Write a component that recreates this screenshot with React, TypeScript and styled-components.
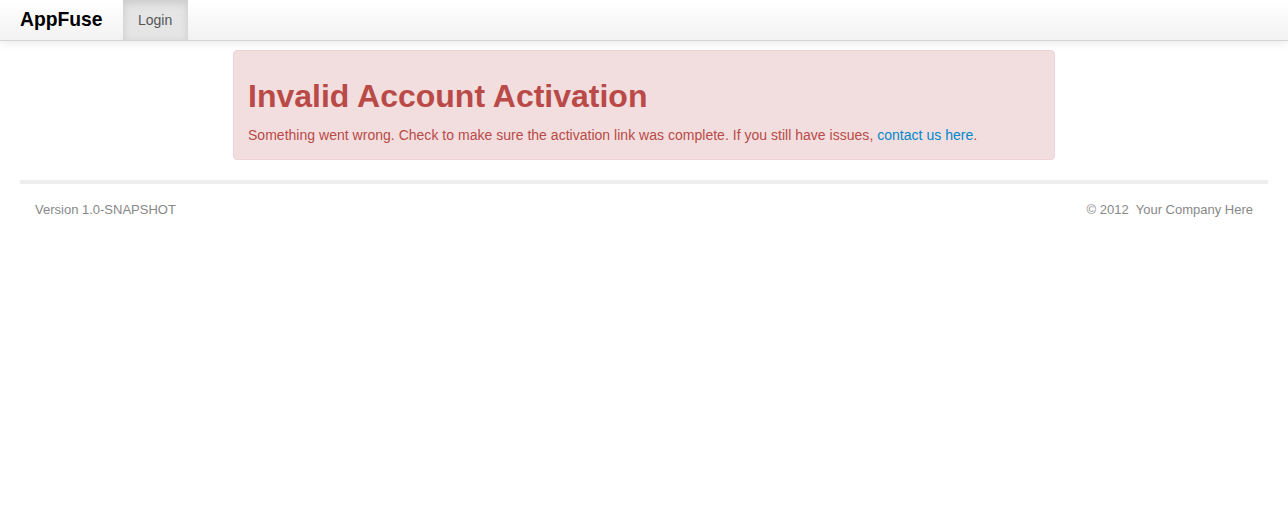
import React from "react";
import styled, { createGlobalStyle } from "styled-components";

const Global = createGlobalStyle`
  html, body { margin: 0; padding: 0; background: #fff; }
  body { font-family: "Liberation Sans", Arial, sans-serif; font-size: 14px; line-height: 20px; color: #333; }
  * { box-sizing: border-box; }
`;

const Navbar = styled.div`
  height: 41px;
  display: flex;
  align-items: stretch;
  padding: 0 20px;
  background: linear-gradient(to bottom, #ffffff, #f2f2f2);
  border-bottom: 1px solid #d4d4d4;
  box-shadow: 0 1px 10px rgba(0, 0, 0, 0.1);
  position: relative;
`;

const Brand = styled.a`
  display: flex;
  align-items: center;
  width: 103px;
  font-size: 19.3px;
  font-weight: bold;
  color: #000;
  text-decoration: none;
  padding-bottom: 1px;
`;

const NavItem = styled.a<{ $active?: boolean }>`
  display: flex;
  align-items: center;
  padding: 0 15px;
  width: 65px;
  height: 40px;
  color: #555;
  text-decoration: none;
  font-size: 14px;
  background: ${(p) => (p.$active ? "#e5e5e5" : "transparent")};
  box-shadow: ${(p) => (p.$active ? "inset 0 3px 8px rgba(0, 0, 0, 0.125)" : "none")};
`;

const Main = styled.div`
  display: flex;
  justify-content: center;
  padding-top: 9px;
`;

const Alert = styled.div`
  width: 822px;
  background: #f2dede;
  border: 1px solid #eed3d7;
  border-radius: 4px;
  color: #b94a48;
  padding: 14px 35px 14px 14px;
`;

const Heading = styled.h1`
  margin: 11px 0 9px;
  font-size: 32px;
  line-height: 40px;
  font-weight: bold;
  color: #b94a48;
`;

const Para = styled.p`
  margin: 0;
  font-size: 14px;
  line-height: 20px;
  letter-spacing: 0.02px;
`;

const Link = styled.a`
  color: #0088cc;
  text-decoration: none;
`;

const Footer = styled.div`
  margin: 20px 20px 0;
  border-top: 4px solid #eeeeee;
  padding: 17px 15px;
  display: flex;
  justify-content: space-between;
  font-size: 13px;
  line-height: 18px;
  color: #888;
`;

const FooterText = styled.span`
  white-space: pre;
`;

export default function App() {
  return (
    <>
      <Global />
      <Navbar>
        <Brand href="#">AppFuse</Brand>
        <NavItem href="#" $active>Login</NavItem>
      </Navbar>
      <Main>
        <Alert>
          <Heading>Invalid Account Activation</Heading>
          <Para>
            Something went wrong. Check to make sure the activation link was complete. If you still have issues,{" "}
            <Link href="#">contact us here</Link>.
          </Para>
        </Alert>
      </Main>
      <Footer>
        <FooterText>Version 1.0-SNAPSHOT</FooterText>
        <FooterText>{"© 2012  Your Company Here"}</FooterText>
      </Footer>
    </>
  );
}
